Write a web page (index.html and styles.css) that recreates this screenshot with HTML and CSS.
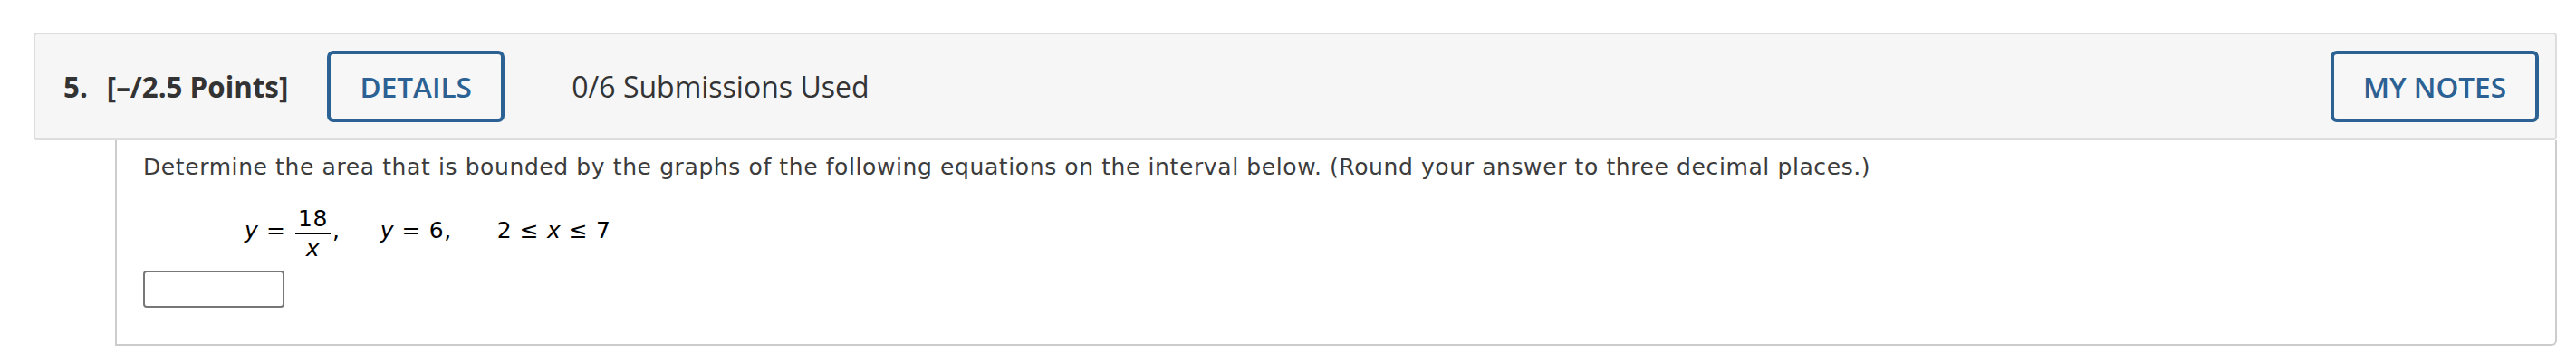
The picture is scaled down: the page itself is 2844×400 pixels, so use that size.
FILE: index.html
```html
<!DOCTYPE html>
<html lang="en">
<head>
<meta charset="utf-8">
<title>Question 5</title>
<link rel="stylesheet" href="styles.css">
</head>
<body>
<div class="question">
  <div class="q-header">
    <span class="q-num">5.</span>
    <span class="q-points">[–/2.5 Points]</span>
    <button class="btn btn-details">DETAILS</button>
    <span class="q-subs">0/6 Submissions Used</span>
    <button class="btn btn-notes">MY NOTES</button>
  </div>
  <div class="q-body">
    <p class="q-text">Determine the area that is bounded by the graphs of the following equations on the interval below. (Round your answer to three decimal places.)</p>
    <div class="math">
      <span class="eq eq1"><i>y</i> = <span class="frac"><span class="num">18</span><span class="den"><i>x</i></span></span><span class="comma">,</span></span>
      <span class="eq eq2"><i>y</i> = 6,</span>
      <span class="eq eq3">2 ≤ <i>x</i> ≤ 7</span>
    </div>
    <input class="answer" type="text" aria-label="answer">
  </div>
</div>
</body>
</html>
```
FILE: styles.css
```css
html, body {
  margin: 0;
  padding: 0;
  background: #ffffff;
}
body {
  padding: 36px 21px 0 37px;
}
.question {
  width: 2786px;
}
.q-header {
  box-sizing: border-box;
  height: 119px;
  display: flex;
  align-items: center;
  padding: 0 18px 0 31px;
  background: #f6f6f6;
  border: 2px solid #dddddd;
  border-radius: 4px;
  font-family: "Open Sans", "Liberation Sans", sans-serif;
  color: #333333;
  font-size: 32px;
}
.q-num {
  font-weight: 700;
  font-size: 31.3px;
  margin-right: 21px;
}
.q-points {
  font-weight: 700;
  font-size: 31.3px;
  margin-right: 43px;
}
.btn {
  box-sizing: border-box;
  height: 79px;
  background: #f7f7f7;
  border: 4px solid #2c6194;
  border-radius: 7px;
  color: #2c6194;
  font-family: "Open Sans", "Liberation Sans", sans-serif;
  font-size: 31.5px;
  font-weight: 600;
  padding: 0;
}
.btn-details {
  width: 196px;
  margin-right: 74px;
}
.q-subs {
  font-weight: 400;
  flex: 1;
}
.btn-notes {
  width: 230px;
}
.q-body {
  box-sizing: border-box;
  margin-left: 90px;
  height: 227px;
  border: 2px solid #cccccc;
  border-top: none;
  border-radius: 0 0 6px 0;
  padding: 12px 0 0 29px;
  font-family: "DejaVu Sans", Verdana, sans-serif;
  font-size: 25px;
  letter-spacing: 0.6px;
}
.q-text {
  margin: 0;
  line-height: 36px;
  color: #3c3c3c;
}
.math {
  margin-top: 28px;
  padding-left: 112px;
  color: #000000;
  display: flex;
  align-items: baseline;
  height: 56px;
}
.eq {
  white-space: nowrap;
}
.eq1 {
  margin-right: 44px;
}
.eq2 {
  margin-right: 50px;
}
.frac {
  display: inline-flex;
  flex-direction: column;
  align-items: center;
  vertical-align: 13px;
  line-height: 22px;
  margin-left: 2px;
}
.num {
  padding: 0 3px 4px;
  border-bottom: 2px solid #000;
}
.den {
  padding-top: 5px;
}
.comma {
  margin-left: 2px;
}
.answer {
  display: block;
  box-sizing: border-box;
  margin-top: 12px;
  width: 156px;
  height: 41px;
  border: 2px solid #777777;
  border-radius: 4px;
  background: #ffffff;
  padding: 0;
}
```
